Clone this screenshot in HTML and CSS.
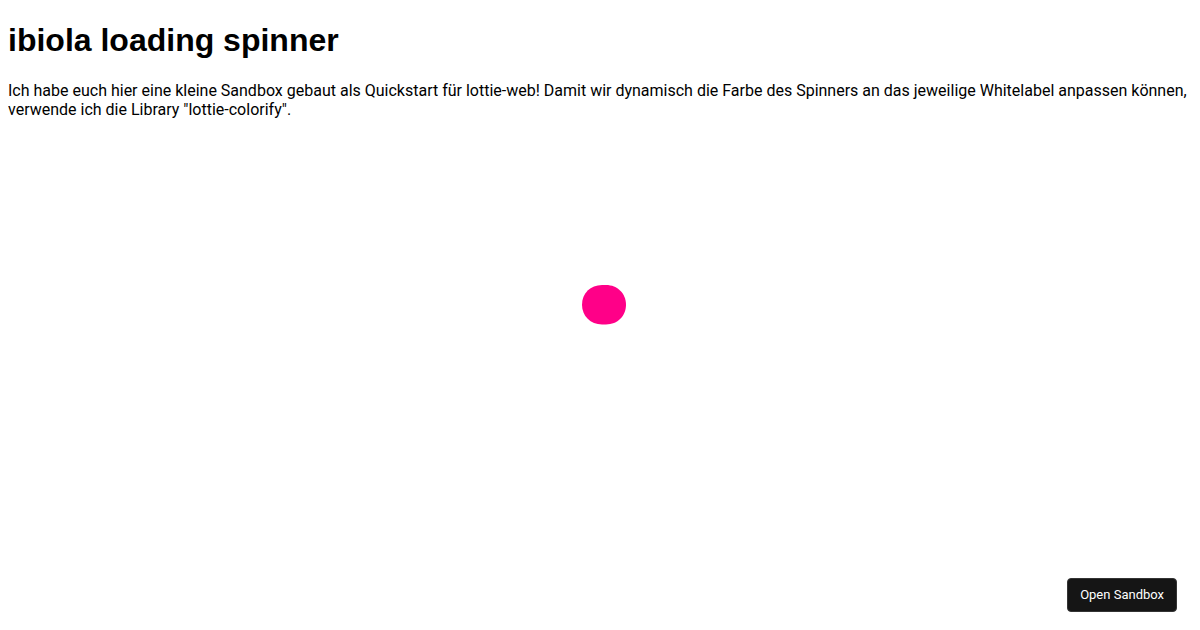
FILE: index.html
```html
<!DOCTYPE html>
<html lang="de">
<head>
    <meta charset="UTF-8">
    <meta name="viewport" content="width=device-width, initial-scale=1.0">
    <title>ibiola loading spinner</title>
    <link rel="stylesheet" href="styles.css">
</head>
<body>
    <h1>ibiola loading spinner</h1>
    <p>Ich habe euch hier eine kleine Sandbox gebaut als Quickstart für lottie-web! Damit wir dynamisch die Farbe des Spinners an das jeweilige Whitelabel anpassen können, verwende ich die Library "lottie-colorify".</p>
    <div class="spinner">
        <svg viewBox="0 0 44 40" width="44" height="40" aria-hidden="true">
            <path fill="#ff0088" d="M20 0H24C35.500 0 44 8.500 44 19.700S35.500 39.400 24 39.400H20C8.500 39.400 0 31 0 19.700S8.500 0 20 0Z"/>
        </svg>
    </div>
    <button class="open-sandbox" type="button">Open Sandbox</button>
</body>
</html>
```

FILE: styles.css
```css
body {
    margin: 0 8px;
    font-family: "Liberation Sans", Helvetica, Arial, sans-serif;
    background-color: #fff;
    color: #000;
}
h1 {
    margin: 20px 0 21px;
    font-size: 32px;
    line-height: 40px;
}
p {
    margin: 0;
    font-family: Roboto, Helvetica, Arial, sans-serif;
    font-size: 16px;
    line-height: 19px;
}
.spinner {
    display: flex;
    justify-content: center;
    align-items: center;
    height: 372px;
    padding-left: 8px;
}
.spinner svg {
    display: block;
}
.open-sandbox {
    position: fixed;
    right: 23px;
    bottom: 18px;
    height: 34px;
    padding: 0 12px 2px;
    background-color: #151515;
    color: #fff;
    border: 1px solid #343434;
    border-radius: 4px;
    font-family: Roboto, Helvetica, Arial, sans-serif;
    font-size: 13px;
    cursor: pointer;
}
```
